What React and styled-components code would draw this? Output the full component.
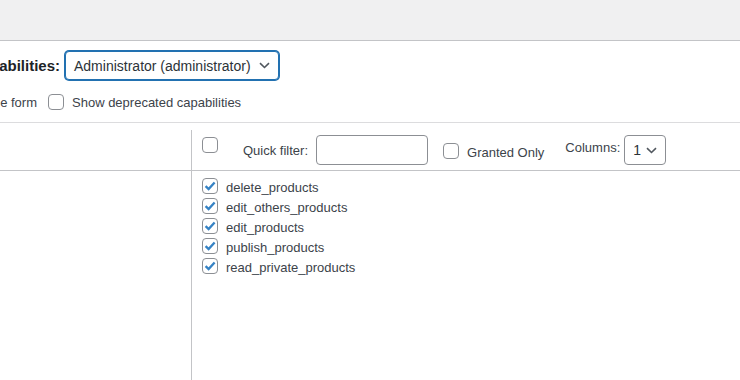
import React from "react";
import styled, { createGlobalStyle } from "styled-components";

const GlobalStyle = createGlobalStyle`
  html, body {
    margin: 0;
    padding: 0;
    background: #ffffff;
  }
  body {
    font-family: "Liberation Sans", Arial, sans-serif;
    font-size: 13px;
    color: #3c434a;
  }
`;

const capabilities = [
  "delete_products",
  "edit_others_products",
  "edit_products",
  "publish_products",
  "read_private_products",
];

const Page = styled.div`
  min-height: 100vh;
  display: flex;
  flex-direction: column;
  overflow: hidden;
`;

const TopBar = styled.div`
  height: 40px;
  background: #f0f0f1;
  border-bottom: 1px solid #c3c4c7;
  flex-shrink: 0;
`;

const Toolbar = styled.div`
  padding-top: 10px;
  height: 71px;
  border-bottom: 1px solid #dcdcde;
  flex-shrink: 0;
`;

const Row = styled.div`
  display: flex;
  align-items: center;
  height: ${(p) => p.height}px;
  margin-top: ${(p) => p.top || 0}px;
`;

// the page is cut at the left edge, so the leading text is right-aligned and clipped
const Clip = styled.div`
  width: ${(p) => p.width}px;
  margin-right: ${(p) => p.gap}px;
  display: flex;
  justify-content: flex-end;
  overflow: hidden;
  white-space: nowrap;
  flex-shrink: 0;
`;

const RoleLabel = styled.span`
  font-size: 15px;
  font-weight: bold;
  color: #1d2327;
`;

const Select = styled.div`
  box-sizing: border-box;
  width: ${(p) => p.width}px;
  height: ${(p) => p.height}px;
  display: flex;
  align-items: center;
  justify-content: space-between;
  padding: 0 ${(p) => p.padRight}px 0 ${(p) => p.padLeft}px;
  border: 1px solid ${(p) => (p.focus ? "#2271b1" : "#8c8f94")};
  box-shadow: ${(p) => (p.focus ? "0 0 0 1px #2271b1" : "none")};
  border-radius: 4px;
  background: #fff;
  font-size: 14px;
  color: #2c3338;
  white-space: nowrap;
  margin-left: ${(p) => p.left || 0}px;
  margin-top: ${(p) => p.top || 0}px;
`;

const Box = styled.span`
  box-sizing: border-box;
  width: 16px;
  height: 16px;
  flex-shrink: 0;
  border: 1px solid #8c8f94;
  border-radius: 4px;
  background: #fff;
  display: inline-flex;
  align-items: center;
  justify-content: center;
  margin-left: ${(p) => p.left || 0}px;
  margin-top: ${(p) => p.top || 0}px;
`;

const Text = styled.span`
  font-size: 13px;
  line-height: 20px;
  white-space: nowrap;
  margin-left: ${(p) => p.left || 0}px;
  margin-top: ${(p) => p.top || 0}px;
`;

const Grid = styled.div`
  flex: 1;
  display: grid;
  grid-template-columns: 192px 1fr;
  margin-top: 7px;
`;

const Column = styled.div`
  box-sizing: border-box;
  display: flex;
  flex-direction: column;
  border-right: ${(p) => (p.divider ? "1px solid #c3c4c7" : "none")};
`;

const Head = styled.div`
  height: 40px;
  border-bottom: 1px solid #c3c4c7;
  display: flex;
  align-items: flex-start;
`;

const Input = styled.div`
  box-sizing: border-box;
  width: 112px;
  height: 30px;
  border: 1px solid #8c8f94;
  border-radius: 4px;
  background: #fff;
  margin-left: ${(p) => p.left}px;
  margin-top: ${(p) => p.top}px;
  flex-shrink: 0;
`;

const List = styled.div`
  padding-top: 5px;
  display: flex;
  flex-direction: column;
`;

const Item = styled.label`
  display: flex;
  align-items: center;
  gap: 8px;
  height: 20px;
  padding-left: 10px;
  font-size: 13px;

  & > span:last-child {
    position: relative;
    top: 1px;
  }
`;

const Chevron = () => (
  <svg width="11" height="7" viewBox="0 0 11 7">
    <path d="M1 1.2 L5.5 5.5 L10 1.2" fill="none" stroke="#50575e" strokeWidth="1.6" />
  </svg>
);

const Check = () => (
  <svg width="14" height="14" viewBox="0 0 14 14">
    <path
      d="M2.6 7.2 L5.6 10.1 L11.6 3.4"
      fill="none"
      stroke="#3582c4"
      strokeWidth="2.3"
      strokeLinejoin="miter"
    />
  </svg>
);

const CheckBox = ({ checked, left, top }) => (
  <Box left={left} top={top}>
    {checked && <Check />}
  </Box>
);

const App = () => {
  return (
    <Page>
      <GlobalStyle />
      <TopBar />
      <Toolbar>
        <Row height={29}>
          <Clip width={60} gap={5}>
            <RoleLabel>Select Role and change its capabilities:</RoleLabel>
          </Clip>
          <Select focus width={214} height={29} padLeft={8} padRight={8}>
            <span>Administrator (administrator)</span>
            <Chevron />
          </Select>
        </Row>
        <Row height={16} top={14}>
          <Clip width={37} gap={11}>
            <Text top={2}>Show capabilities in human readable form</Text>
          </Clip>
          <CheckBox />
          <Text left={8} top={2}>Show deprecated capabilities</Text>
        </Row>
      </Toolbar>
      <Grid>
        <Column divider>
          <Head />
        </Column>
        <Column>
          <Head>
            <CheckBox left={10} top={7} />
            <Text left={25} top={11}>Quick filter:</Text>
            <Input left={8} top={5} />
            <CheckBox left={15} top={13} />
            <Text left={8} top={13}>Granted Only</Text>
            <Text left={21} top={8}>Columns:</Text>
            <Select width={42} height={30} padLeft={8} padRight={8} left={4} top={5}>
              <span>1</span>
              <Chevron />
            </Select>
          </Head>
          <List>
            {capabilities.map((cap) => (
              <Item key={cap}>
                <CheckBox checked />
                <span>{cap}</span>
              </Item>
            ))}
          </List>
        </Column>
      </Grid>
    </Page>
  );
};

export default App;
